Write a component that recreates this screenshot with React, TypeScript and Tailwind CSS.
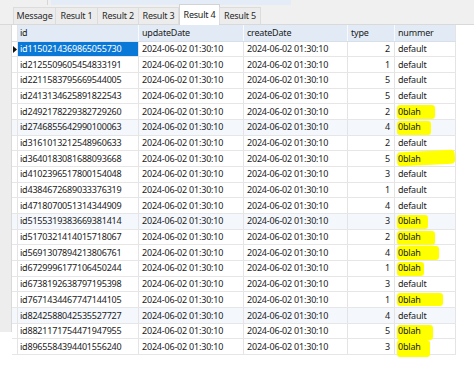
import React from "react";

type Row = {
  id: string;
  type: number;
  nummer: string;
  mark?: string;
};

const DATE = "2024-06-02 01:30:10";

// mark = the hand-drawn yellow marker stroke on top of "0blah"
const rows: Row[] = [
  { id: "id1150214369865055730", type: 2, nummer: "default" },
  { id: "id2125509605454833191", type: 1, nummer: "default" },
  { id: "id2211583795669544005", type: 5, nummer: "default" },
  { id: "id2413134625891822543", type: 5, nummer: "default" },
  { id: "id2492178229382729260", type: 2, nummer: "0blah", mark: "w-[38px] top-[1px] h-[14px] rounded-[3px]" },
  { id: "id2746855642990100063", type: 4, nummer: "0blah", mark: "w-[34px] top-[1px] h-[14px] rounded-[3px]" },
  { id: "id3161013212548960633", type: 2, nummer: "default" },
  { id: "id3640183081688093668", type: 5, nummer: "0blah", mark: "w-[58px] top-[0px] h-[14px] rounded-[4px] -rotate-3" },
  { id: "id4102396517800154048", type: 3, nummer: "default" },
  { id: "id4384672689033376319", type: 1, nummer: "default" },
  { id: "id4718070051314344909", type: 4, nummer: "default" },
  { id: "id5155319383669381414", type: 3, nummer: "0blah", mark: "w-[31px] top-[1px] h-[14px] rounded-[3px]" },
  { id: "id5170321414015718067", type: 2, nummer: "0blah", mark: "w-[38px] top-[1px] h-[14px] rounded-[3px]" },
  { id: "id5691307894213806761", type: 4, nummer: "0blah", mark: "w-[42px] top-[1px] h-[14px] rounded-[3px]" },
  { id: "id6729996177106450244", type: 1, nummer: "0blah", mark: "w-[27px] top-[1px] h-[14px] rounded-[3px]" },
  { id: "id6738192638797195398", type: 3, nummer: "default" },
  { id: "id7671434467747144105", type: 1, nummer: "0blah", mark: "w-[46px] top-[1px] h-[13px] rounded-[3px]" },
  { id: "id8242588042535527727", type: 4, nummer: "default" },
  { id: "id8821171754471947955", type: 5, nummer: "0blah", mark: "w-[36px] top-[1px] h-[15px] rounded-[3px]" },
  { id: "id8965584394401556240", type: 3, nummer: "0blah", mark: "w-[33px] top-[1px] h-[17px] rounded-[3px]" },
];

const tabs = ["Message", "Result 1", "Result 2", "Result 3", "Result 4", "Result 5"];
const tabWidths = ["w-[43px]", "w-[43px]", "w-[42px]", "w-[41px]", "w-[41px]", "w-[42px]"];

export default function App() {
  return (
    <div className="w-[474px] h-[365px] bg-white overflow-hidden font-['Noto_Sans',sans-serif] text-[9px] tracking-[-0.2px] text-[#1b1b1b]">
      {/* scroll strip at the very top */}
      <div className="flex h-[5px] bg-[#f0f0f0]">
        <div className="w-[48px] border-r border-[#d6d6d6]" />
        <div className="w-[240px] ml-[3px] bg-[#e4edf7]" />
      </div>

      {/* result tabs */}
      <div className="flex items-end h-[20px] bg-[#f0f0f0] pl-[13px] border-b border-[#d9d9d9]">
        {tabs.map((t, i) =>
          i === 4 ? (
            <div
              key={t}
              className={`${tabWidths[i]} h-[21px] -mb-px bg-white border border-b-0 border-[#d3d3d3] flex items-center justify-center text-[#1b1b1b]`}
            >
              {t}
            </div>
          ) : (
            <div
              key={t}
              className={`${tabWidths[i]} h-[17px] bg-[#ececec] border border-b-0 border-[#dcdcdc] -ml-px first:ml-0 flex items-center justify-center text-[#2a2a2a]`}
            >
              {t}
            </div>
          )
        )}
      </div>

      <div className="flex">
        <div className="w-[12px] h-[307px] bg-[#ededed] border-r border-[#dadada]" />

        <div className="w-[444px]">
          {/* header */}
          <div className="flex h-[16.5px] border-b border-[#d7dfe9]">
            <div className="w-[6px] bg-white border-r border-[#e4e4e4]" />
            <div className="w-[121px] bg-[#e1eaf5] border-r border-[#f7faff] pl-[2px] flex items-center">id</div>
            <div className="w-[105px] bg-[#e1eaf5] border-r border-[#f7faff] pl-[3px] flex items-center">updateDate</div>
            <div className="w-[104px] bg-[#e1eaf5] border-r border-[#f7faff] pl-[3px] flex items-center">createDate</div>
            <div className="w-[47px] bg-[#e1eaf5] border-r border-[#f7faff] pl-[3px] flex items-center">type</div>
            <div className="w-[61px] bg-[#e1eaf5] border-r border-[#e4e4e4] pl-[3px] flex items-center">nummer</div>
          </div>

          {rows.map((r, i) => (
            <div
              key={r.id}
              className={`flex h-[15.68px] border-b border-[#e6e6e6] ${
                i % 6 === 5 ? "bg-[#f4f8fd]" : "bg-white"
              }`}
            >
              <div className="w-[6px] border-r border-[#e4e4e4] relative">
                {i === 0 && (
                  <svg width="4" height="7" viewBox="0 0 4 7" className="absolute left-[1px] top-[4px]">
                    <path d="M0 0 L4 3.5 L0 7 Z" fill="#111" />
                  </svg>
                )}
              </div>
              <div
                className={`w-[121px] border-r border-[#e4e4e4] pl-[2px] flex items-center ${
                  i === 0 ? "bg-[#0a78d6] text-white" : ""
                }`}
              >
                {r.id}
              </div>
              <div className="w-[105px] border-r border-[#e4e4e4] pl-[3px] flex items-center">{DATE}</div>
              <div className="w-[104px] border-r border-[#e4e4e4] pl-[3px] flex items-center">{DATE}</div>
              <div className="w-[47px] border-r border-[#e4e4e4] pr-[4px] flex items-center justify-end">{r.type}</div>
              <div className="w-[61px] border-r border-[#e4e4e4] pl-[3px] flex items-center relative">
                {r.mark && <span className={`absolute left-[2px] bg-[#ffff00] ${r.mark}`} />}
                <span className="relative">{r.nummer}</span>
              </div>
            </div>
          ))}
        </div>
      </div>
    </div>
  );
}
